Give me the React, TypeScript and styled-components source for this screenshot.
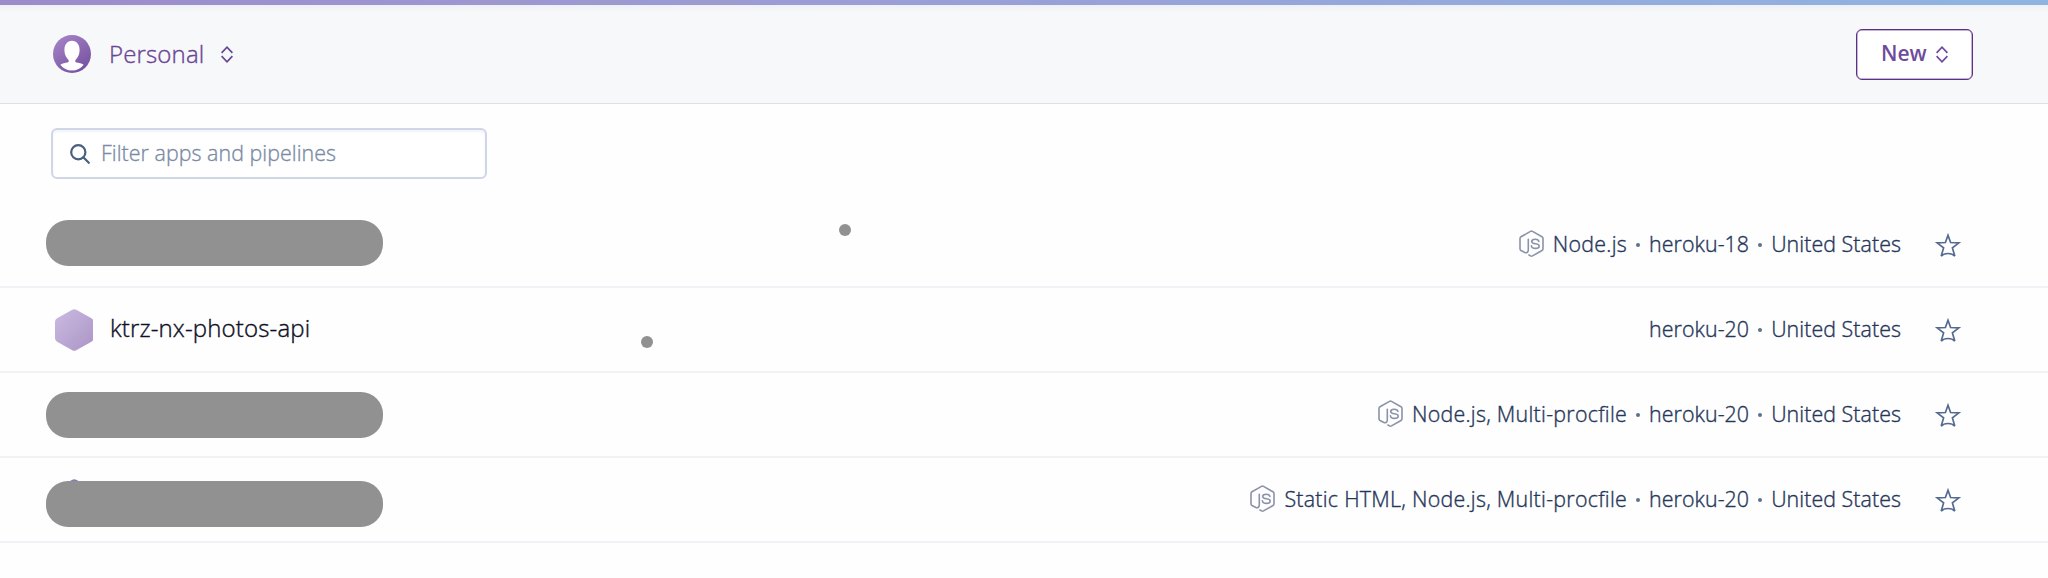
import React from 'react';
import styled, { createGlobalStyle } from 'styled-components';

const GlobalStyle = createGlobalStyle`
  * { box-sizing: border-box; }
  body {
    margin: 0;
    background: #fefefe;
    font-family: "Open Sans", "Noto Sans", sans-serif;
    font-weight: 300;
    font-size: 21.4px;
    color: #26375a;
    -webkit-text-stroke: 0.38px currentColor;
  }
  svg { display: block; flex: none; }
`;

const Page = styled.main`
  position: relative;
  width: 100%;
  min-height: 578px;
  overflow: hidden;
`;

const GradientBar = styled.div`
  height: 5px;
  background: linear-gradient(90deg, #9b8bc9 0%, #9d97d0 25%, #8fb4e0 100%);
`;

const Header = styled.header`
  display: flex;
  align-items: center;
  justify-content: space-between;
  height: 99px;
  padding: 0 75px 0 53px;
  background: linear-gradient(180deg, #eff0f4 0, #f7f8fa 8px, #f7f8fa 100%);
  border-bottom: 1px solid #dfdfe9;
`;

const AccountSwitcher = styled.button`
  display: flex;
  align-items: center;
  height: 60px;
  padding: 0;
  border: 0;
  background: none;
  color: #6b4695;
  font: inherit;
  font-size: 24px;
`;

const AccountName = styled.span`
  margin: 0 17px 0 18px;
  letter-spacing: 0.15px;
  line-height: 34px;
`;

const NewButton = styled.button`
  display: flex;
  align-items: center;
  justify-content: space-between;
  width: 117px;
  height: 51px;
  padding: 0 24px;
  border: 1px solid #5f2f88;
  box-shadow: inset 0 0 0 0.5px #8c68ab;
  border-radius: 6px;
  background: #fff;
  color: #6f4b9b;
  font: inherit;
  font-size: 21px;
  font-weight: 600;
  -webkit-text-stroke: 0;
`;

const ButtonLabel = styled.span`
  line-height: 30px;
  padding-bottom: 2px;
`;

const Toolbar = styled.section`
  height: 99px;
  padding: 24px 51px 0;
`;

const FilterBox = styled.label`
  display: flex;
  align-items: center;
  gap: 11px;
  width: 436px;
  height: 51px;
  padding: 0 17px;
  border: 2px solid #cfd6e5;
  border-radius: 6px;
  background: #fff;
  box-shadow: inset 0 2px 3px #f1f3f9;
`;

const FilterInput = styled.input`
  flex: 1;
  min-width: 0;
  height: 40px;
  padding: 0 0 2px;
  border: 0;
  outline: 0;
  background: none;
  font: inherit;
  letter-spacing: 0.05px;
  color: #2d3e5c;
  -webkit-text-stroke: 0.35px #7f8ea6;
  &::placeholder { color: #7788a2; opacity: 1; }
`;

const AppList = styled.ul`
  margin: 0;
  padding: 0;
  list-style: none;
`;

const AppRow = styled.li`
  position: relative;
  display: flex;
  align-items: center;
  height: 85px;
  padding: 0 86px 0 54.5px;
  border-bottom: 2px solid #f1f2f5;
`;

const AppName = styled.span`
  margin-left: 17px;
  padding-bottom: 4px;
  font-size: 24px;
  letter-spacing: 0.15px;
  line-height: 34px;
  color: #0d1026;
`;

const Redaction = styled.div<{ $top: number }>`
  position: absolute;
  left: 46px;
  top: ${(p) => p.$top}px;
  width: 337px;
  height: 46px;
  border-radius: 22px;
  background: #919191;
`;

const Meta = styled.div`
  display: flex;
  align-items: center;
  margin-left: auto;
  margin-right: 33px;
  white-space: nowrap;
`;

const MetaText = styled.span<{ $tracking?: number }>`
  line-height: 30px;
  padding-bottom: 2px;
  letter-spacing: ${(p) => p.$tracking ?? 0.06}px;
`;

const Stack = styled.span`
  display: flex;
  align-items: center;
  gap: 9px;
`;

const StackIcon = styled.span`
  padding-bottom: 2px;
`;

const Separator = styled.i`
  width: 4px;
  height: 4px;
  margin: 0 9px;
  border-radius: 50%;
  background: #5d7191;
`;

const StarButton = styled.button`
  padding: 0;
  border: 0;
  background: none;
`;

const Spot = styled.span<{ $x: number; $y: number }>`
  position: absolute;
  left: ${(p) => p.$x}px;
  top: ${(p) => p.$y}px;
  width: 12px;
  height: 12px;
  border-radius: 50%;
  background: #919191;
`;

const Avatar = () => (
  <svg width="38" height="38" viewBox="0 0 38 38">
    <defs>
      <linearGradient id="avatar" x1="0.1" y1="0" x2="0.8" y2="1">
        <stop offset="0" stopColor="#a784c8" />
        <stop offset="1" stopColor="#75509e" />
      </linearGradient>
    </defs>
    <circle cx="19" cy="19" r="19" fill="url(#avatar)" />
    <path
      fill="#fff"
      d="M19 5.8c-4.8 0-7.6 4-7.6 9.2 0 4.1 1.5 7.6 3.9 9.7.9 1.2.6 2.4-.8 2.8-2.3.5-4.9.5-7.1 2.2C10.1 33.5 14.3 35.600 19 35.600s8.9-2.1 11.6-5.900c-2.2-1.7-4.8-1.7-7.1-2.2-1.4-.4-1.700-1.600-.8-2.800 2.400-2.100 3.900-5.600 3.900-9.700 0-5.200-2.800-9.200-7.600-9.200z"
    />
  </svg>
);

const Chevrons = () => (
  <svg width="12" height="17" viewBox="0 0 12 17" fill="none" stroke="currentColor" strokeWidth="1.7">
    <path d="M.6 6.800 6 1.200l5.400 5.600M.6 10.200 6 15.800l5.400-5.600" />
  </svg>
);

const SearchIcon = () => (
  <svg width="20" height="20" viewBox="0 0 20 20" fill="none" stroke="#4a5f80" strokeWidth="2.2">
    <circle cx="8.3" cy="8.3" r="7.1" />
    <path d="m13.3 13.3 5.5 5.5" strokeLinecap="round" />
  </svg>
);

const Hexagon = ({ id, from, to }: { id: string; from: string; to: string }) => (
  <svg width="38.500" height="42" viewBox="0 0 39 42">
    <defs>
      <linearGradient id={id} x1="0" y1="0" x2="1" y2="1">
        <stop offset="0.15" stopColor={from} />
        <stop offset="0.9" stopColor={to} />
      </linearGradient>
    </defs>
    <path
      fill={`url(#${id})`}
      d="M17.500.6a4 4 0 0 1 4 0l15.400 8.500A4 4 0 0 1 39 12.600v16.800a4 4 0 0 1-2.100 3.500l-15.400 8.500a4 4 0 0 1-4 0L2.100 32.900A4 4 0 0 1 0 29.400V12.600a4 4 0 0 1 2.100-3.500z"
    />
  </svg>
);

const NodeIcon = () => (
  <svg width="25" height="28" viewBox="0 0 25 28" fill="none" stroke="#8b93aa" strokeWidth="1.6" strokeLinecap="round" strokeLinejoin="round">
    <path d="M9.300 9.300v10.800c0 2-1.500 3-3.400 2.400L2 20.500a2 2 0 0 1-1-1.700V8.500a2 2 0 0 1 1-1.700l9.500-5.400a2 2 0 0 1 2 0L23 6.800a2 2 0 0 1 1 1.700v10.300a2 2 0 0 1-1 1.700l-9.500 5.400a2 2 0 0 1-2 0l-1.600-.9" />
    <path d="M19.900 11.500c-.2-1.500-1.600-2.300-3.700-2.300s-3.500.8-3.500 2.300c0 3.500 7.500 1 7.500 4.500 0 1.600-1.400 2.400-3.800 2.400-2.500 0-3.900-1-4-2.700" />
  </svg>
);

const StarIcon = () => (
  <svg width="28" height="28" viewBox="0 0 28 28" fill="none" stroke="#546a90" strokeWidth="1.7" strokeLinejoin="miter">
    <path d="m14 4.200 2.600 7.300 8.300.3-6.500 5.100 2.400 8.200c-3-3.500-10.600-3.500-13.600 0l2.400-8.200-6.500-5.100 8.300-.3z" />
  </svg>
);

type AppEntry = {
  name?: string;
  stack?: string;
  version: string;
  redactionTop?: number;
  hex?: [string, string];
};

const apps: AppEntry[] = [
  { stack: 'Node.js', version: 'heroku-18', redactionTop: 17 },
  { name: 'ktrz-nx-photos-api', version: 'heroku-20', hex: ['#c6b5dd', '#ae98c8'] },
  { stack: 'Node.js, Multi-procfile', version: 'heroku-20', redactionTop: 18.5 },
  { stack: 'Static HTML, Node.js, Multi-procfile', version: 'heroku-20', redactionTop: 23, hex: ['#8a7bb9', '#7a68ab'] },
];

export default function App() {
  return (
    <Page>
      <GlobalStyle />
      <GradientBar />
      <Header>
        <AccountSwitcher>
          <Avatar />
          <AccountName>Personal</AccountName>
          <Chevrons />
        </AccountSwitcher>
        <NewButton>
          <ButtonLabel>New</ButtonLabel>
          <Chevrons />
        </NewButton>
      </Header>
      <Toolbar>
        <FilterBox>
          <SearchIcon />
          <FilterInput placeholder="Filter apps and pipelines" />
        </FilterBox>
      </Toolbar>
      <AppList>
        {apps.map((app, i) => (
          <AppRow key={i}>
            {app.hex && <Hexagon id={`hex${i}`} from={app.hex[0]} to={app.hex[1]} />}
            {app.name && <AppName>{app.name}</AppName>}
            {app.redactionTop !== undefined && <Redaction $top={app.redactionTop} />}
            <Meta>
              {app.stack && (
                <>
                  <Stack>
                    <StackIcon>
                      <NodeIcon />
                    </StackIcon>
                    <MetaText $tracking={0.27}>{app.stack}</MetaText>
                  </Stack>
                  <Separator />
                </>
              )}
              <MetaText>{app.version}</MetaText>
              <Separator />
              <MetaText>United States</MetaText>
            </Meta>
            <StarButton aria-label="Favorite">
              <StarIcon />
            </StarButton>
          </AppRow>
        ))}
      </AppList>
      <Spot $x={838.5} $y={223.5} />
      <Spot $x={641.3} $y={335.5} />
    </Page>
  );
}
